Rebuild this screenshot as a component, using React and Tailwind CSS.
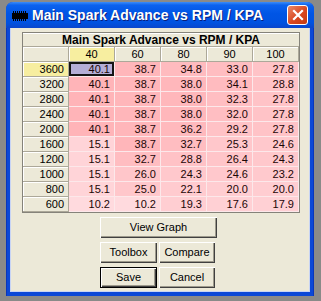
import React from "react";

const cols = [40, 60, 80, 90, 100];
const rows = [
  [3600, [40.1, 38.7, 34.8, 33.0, 27.8]],
  [3200, [40.1, 38.7, 38.0, 34.1, 28.8]],
  [2800, [40.1, 38.7, 38.0, 32.3, 27.8]],
  [2400, [40.1, 38.7, 38.0, 32.0, 27.8]],
  [2000, [40.1, 38.7, 36.2, 29.2, 27.8]],
  [1600, [15.1, 38.7, 32.7, 25.3, 24.6]],
  [1200, [15.1, 32.7, 28.8, 26.4, 24.3]],
  [1000, [15.1, 26.0, 24.3, 24.6, 23.2]],
  [800, [15.1, 25.0, 22.1, 20.0, 20.0]],
  [600, [10.2, 10.2, 19.3, 17.6, 17.9]],
];

function cellColor(v) {
  const t = Math.max(0, Math.min(1, (v - 10) / 30));
  const g = Math.round(218 - t * 38);
  return `rgb(255,${g},${Math.min(255, g + 4)})`;
}

function ChipIcon() {
  return (
    <svg width="16" height="10" viewBox="0 0 16 10">
      <rect x="0" y="2" width="16" height="6" fill="#000" />
      {[1, 3, 5, 7, 9, 11, 13].map((x) => (
        <g key={x}>
          <rect x={x} y="0" width="1" height="2" fill="#000" />
          <rect x={x} y="8" width="1" height="2" fill="#000" />
        </g>
      ))}
    </svg>
  );
}

function Btn({ children, className = "", def = false }) {
  return (
    <div
      className={
        "flex items-center justify-center h-[21px] bg-[#ECE9D8] text-[11px] text-black " +
        (def
          ? "border border-black shadow-[inset_1px_1px_#fff,inset_-1px_-1px_#404040,inset_-2px_-2px_#9d9a8c] "
          : "shadow-[inset_1px_1px_#fff,inset_-1px_-1px_#404040,inset_-2px_-2px_#9d9a8c] ") +
        className
      }
    >
      {children}
    </div>
  );
}

export default function App() {
  return (
    <div className="w-[321px] h-[301px] bg-[#8a8a88] pt-[2px] pl-[6px] overflow-hidden font-['Liberation_Sans',Arial,sans-serif]">
      <div className="w-[308px] h-[294px] flex flex-col rounded-t-[7px] overflow-hidden bg-[#0a3fcf]">
        {/* Title bar */}
        <div className="h-[26px] flex items-center bg-[linear-gradient(to_bottom,#3b8cf8_0%,#0b62ee_12%,#0055e5_45%,#0052e0_80%,#0a46cc_100%)] shrink-0">
          <div className="ml-[6px] mt-[1px]">
            <ChipIcon />
          </div>
          <span className="ml-[4px] text-white font-bold text-[14px] [text-shadow:1px_1px_#0a1e7a]">
            Main Spark Advance vs RPM / KPA
          </span>
          <div className="ml-auto mr-[6px] w-[21px] h-[20px] rounded-[3px] border border-white bg-[linear-gradient(to_bottom_right,#e98a6a,#d9471f_55%,#c23a12)] flex items-center justify-center">
            <svg width="12" height="12" viewBox="0 0 12 12">
              <path d="M2 2 L10 10 M10 2 L2 10" stroke="#fff" strokeWidth="2.2" strokeLinecap="square" />
            </svg>
          </div>
        </div>
        {/* Body frame */}
        <div className="flex-1 flex px-[4px] pb-[4px] bg-[linear-gradient(to_right,#08259e_0px,#0b48d6_1px,#0b48d6_calc(100%-1px),#08259e_100%)]">
          <div className="flex-1 bg-[#ECE9D8] shadow-[inset_1px_0_#c7d4f5,inset_-1px_0_#c7d4f5,inset_0_-1px_#c7d4f5] pl-[12px] pt-[4px] flex flex-col">
            {/* Table */}
            <div className="w-[278px] border border-[#85837a] bg-[#ECE9D8] text-[11px]">
              <div className="h-[14px] leading-[14px] text-center font-bold text-[12px] text-black border-b border-[#aca899] shadow-[inset_0_1px_#fff]">
                Main Spark Advance vs RPM / KPA
              </div>
              <div className="grid grid-cols-[46px_repeat(5,46px)]">
                <div className="h-[15px] border-r border-b border-[#aca899] shadow-[inset_1px_1px_#fff]" />
                {cols.map((c, i) => (
                  <div
                    key={c}
                    className={
                      "h-[15px] leading-[14px] text-center text-black border-r border-b border-[#aca899] shadow-[inset_1px_1px_#fff] " +
                      (i === 0 ? "bg-[#f7eea0]" : "bg-[#ECE9D8]")
                    }
                  >
                    {c}
                  </div>
                ))}
                {rows.map(([rpm, vals], ri) => (
                  <React.Fragment key={rpm}>
                    <div
                      className={
                        "h-[15px] leading-[14px] text-right pr-[4px] text-black border-r border-b border-[#aca899] shadow-[inset_1px_1px_#fff] " +
                        (ri === 0 ? "bg-[#f7eea0]" : "bg-[#ECE9D8]")
                      }
                    >
                      {rpm}
                    </div>
                    {vals.map((v, ci) => {
                      const sel = ri === 0 && ci === 0;
                      return (
                        <div
                          key={ci}
                          className={
                            "h-[15px] leading-[14px] text-right pr-[4px] text-[#1c0606] border-r border-b border-[#fce8ea] " +
                            (sel ? "shadow-[inset_0_0_0_2px_#151515]" : "")
                          }
                          style={{ backgroundColor: sel ? "#b5aed6" : cellColor(v) }}
                        >
                          {v.toFixed(1)}
                        </div>
                      );
                    })}
                  </React.Fragment>
                ))}
              </div>
            </div>
            {/* Buttons */}
            <div className="ml-[78px] mt-[4px] flex flex-col gap-[4px] w-[117px]">
              <Btn className="w-[117px]">View Graph</Btn>
              <div className="flex gap-[2px]">
                <Btn className="w-[57px]">Toolbox</Btn>
                <Btn className="w-[56px]">Compare</Btn>
              </div>
              <div className="flex gap-[2px]">
                <Btn className="w-[57px]" def>
                  Save
                </Btn>
                <Btn className="w-[56px]">Cancel</Btn>
              </div>
            </div>
          </div>
        </div>
      </div>
    </div>
  );
}
